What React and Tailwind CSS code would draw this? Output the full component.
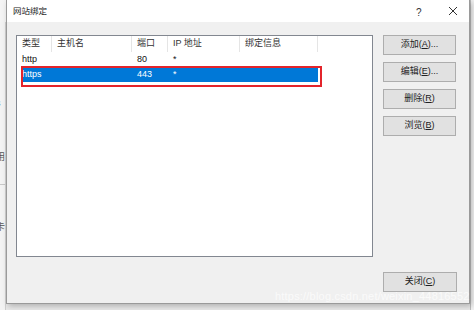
export default function App() {
  const font = { fontFamily: '"Liberation Sans", "Noto Sans CJK SC", sans-serif' };
  const cols = [35, 80, 36, 72, 78];
  const Btn = ({ label, k, tail }) => (
    <div className="h-[20px] w-[73px] bg-[#e1e1e1] border border-[#adadad] flex items-center justify-center text-[9px] text-[#222]">
      <span>
        {label}(<span className="underline">{k}</span>){tail}
      </span>
    </div>
  );
  return (
    <div style={font} className="w-[474px] h-[310px] bg-[#e9e9e9] relative overflow-hidden flex">
      {/* left backdrop strip */}
      <div className="w-[6px] h-full flex flex-col text-[9px] text-[#555] overflow-hidden">
        <div className="h-[22px] bg-[#f4f4f4]" />
        <div className="flex-1 flex flex-col border-r border-[#d0d0d0] bg-[#f3f3f3]">
          <div className="h-[77px]" />
          <div className="-ml-[4px] leading-none">s</div>
          <div className="h-[45px]" />
          <div className="-ml-[4px] leading-none">用</div>
          <div className="h-[23px] border-b border-[#c8c8c8]" />
          <div className="h-[38px]" />
          <div className="-ml-[4px] leading-none">卡</div>
        </div>
      </div>
      {/* dialog */}
      <div className="w-[464px] h-[304px] border border-[#9a9a9a] border-t-0 bg-[#f0f0f0] flex flex-col shadow-[2px_2px_6px_rgba(0,0,0,0.25)] relative">
        <div className="h-[22px] bg-white flex items-center pl-[6px] text-[8.5px] text-[#222] relative">
          <span>网站绑定</span>
          <span className="absolute left-[409px] top-[5px] text-[10px] text-[#333]">?</span>
          <svg className="absolute left-[441px] top-[6px]" width="10" height="10" viewBox="0 0 10 10">
            <path d="M1 1L9 9M9 1L1 9" stroke="#333" strokeWidth="1" />
          </svg>
        </div>
        <div className="flex-1 flex pl-[9px] pt-[13px]">
          <div className="w-[357px] h-[222px] bg-white border border-[#828790] relative text-[9px] text-[#111]">
            <div className="flex h-[16px] items-center">
              {["类型", "主机名", "端口", "IP 地址", "绑定信息"].map((t, i) => (
                <div key={i} style={{ width: cols[i] }} className="h-full flex items-center pl-[5px] border-r border-[#e5e5e5] text-[#333]">
                  {t}
                </div>
              ))}
            </div>
            <div className="flex h-[15px] items-center">
              {["http", "", "80", "*", ""].map((t, i) => (
                <div key={i} style={{ width: cols[i] }} className="pl-[5px]">{t}</div>
              ))}
            </div>
            <div className="flex h-[15px] items-center">
              <div className="w-[4px]" />
              <div className="flex h-full items-center bg-[#0078d7] text-white w-[297px]">
                {["https", "", "443", "*", ""].map((t, i) => (
                  <div key={i} style={{ width: i === 0 ? 31 : cols[i] }} className={i === 0 ? "pl-[1px]" : "pl-[5px]"}>{t}</div>
                ))}
              </div>
            </div>
            <div className="absolute left-[4px] top-[30px] w-[301px] h-[21px] border-2 border-[#e3242b]" />
          </div>
          <div className="ml-[10px] flex flex-col gap-[7px]">
            <Btn label="添加" k="A" tail="..." />
            <Btn label="编辑" k="E" tail="..." />
            <Btn label="删除" k="R" tail="" />
            <Btn label="浏览" k="B" tail="" />
          </div>
        </div>
        <div className="h-[31px] flex justify-end pr-[12px]">
          <div className="h-[20px] w-[74px] bg-[#e1e1e1] border border-[#adadad] flex items-center justify-center text-[9px] text-[#222]">
            <span>关闭(<span className="underline">C</span>)</span>
          </div>
        </div>
        <div className="absolute left-[268px] top-[288px] text-[11px] text-white/70 tracking-[0.2px] whitespace-nowrap">
          https://blog.csdn.net/weixin_44816552
        </div>
      </div>
      {/* right backdrop strip */}
      <div className="flex-1 h-full bg-[#f2f2f2] border-l border-[#bdbdbd]" />
    </div>
  );
}
